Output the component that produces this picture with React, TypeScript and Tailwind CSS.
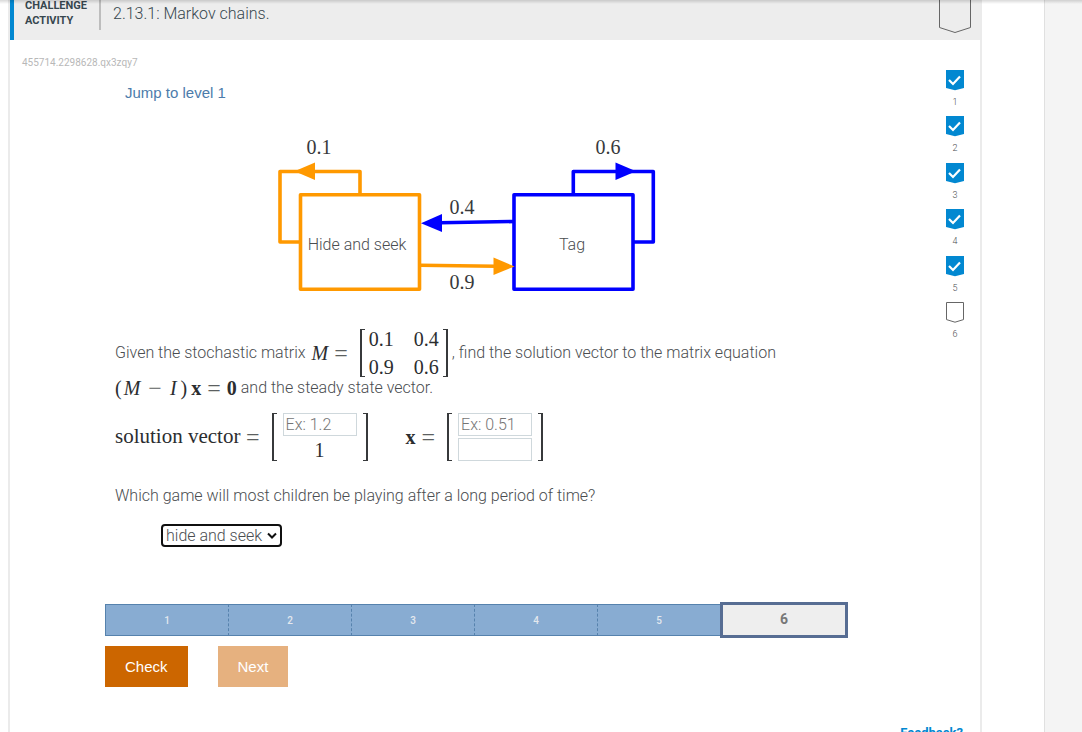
import clsx from "clsx";
import { FC, ReactNode, useState } from "react";

const levels = [1, 2, 3, 4, 5, 6];
const currentLevel = 6;

const math = "font-['Liberation_Serif',serif] text-[20px] text-[#2b2d2f]";
const operator = "font-['Liberation_Serif',serif] text-[24px] leading-6 font-normal text-[#5c5f61]";
const field =
  "block h-[23px] w-[74px] border border-[#cfd8dc] bg-white px-[2px] text-base font-light placeholder:text-[#757575] outline-none";

const LevelBadge: FC<{ done: boolean }> = ({ done }) => (
  <svg className="block h-[21px] w-[18px]" viewBox="0 0 18 21" aria-hidden="true">
    {done ? (
      <>
        <path d="M0 0H18V18L9 20.2L0 18Z" fill="#0288d1" />
        <path d="M3 10L7 14L14 6.600" fill="none" stroke="#fff" strokeWidth="2.200" />
      </>
    ) : (
      <path d="M.5 .5H17.5V17.6L9 20.2L.5 17.6Z" fill="#fff" stroke="#666" />
    )}
  </svg>
);

const Bracketed: FC<{ children: ReactNode; className?: string }> = ({ children, className }) => (
  <div className={clsx("flex h-12 items-stretch", className)}>
    <span className="w-[5px] border-y border-l-2 border-[#37393b]" />
    {children}
    <span className="w-[5px] border-y border-r-2 border-[#37393b]" />
  </div>
);

const Diagram = () => (
  <svg
    className="mt-[25px] ml-[155px] block h-[170px] w-[410px]"
    viewBox="260 130 410 170"
    role="img"
    aria-label="Transition diagram"
  >
    <g fill="none" strokeWidth="3.6" strokeLinejoin="round">
      <path d="M360 194V171.500H280V242H300" stroke="#ff9900" />
      <rect x="300.500" y="194.800" width="119" height="94.500" stroke="#ff9900" />
      <path d="M420 265.300L496 266.300" stroke="#ff9900" />
      <path d="M573.300 194V171.500H653.300V242H633" stroke="#0000ff" />
      <path d="M514 221.500L440 222.800" stroke="#0000ff" />
      <rect x="514" y="194.800" width="119" height="94.500" stroke="#0000ff" />
    </g>
    <path d="M294.500 171.300L315 162.500V180Z" fill="#ff9900" />
    <path d="M514.500 266.400L493.500 257.500V275Z" fill="#ff9900" />
    <path d="M636 171.300L615.500 162.500V180Z" fill="#0000ff" />
    <path d="M421 223.200L442 214V232Z" fill="#0000ff" />
    <g fill="#37393b" fontSize="20" textAnchor="middle" className="font-['Liberation_Serif',serif] font-normal">
      <text x="319" y="154">0.1</text>
      <text x="608" y="154">0.6</text>
      <text x="462" y="214">0.4</text>
      <text x="462" y="289">0.9</text>
    </g>
    <g fill="#4a4d50" fontSize="16" textAnchor="middle" className="font-['Roboto',sans-serif] font-light">
      <text x="357" y="250">Hide and seek</text>
      <text x="572" y="250">Tag</text>
    </g>
  </svg>
);

export default function App() {
  const [game, setGame] = useState("hide and seek");

  return (
    <div className="relative flex h-screen overflow-hidden bg-white font-['Roboto',sans-serif] text-base font-light text-[#4a4d50]">
      <div className="absolute inset-x-0 top-0 z-10 h-1 bg-linear-to-b from-black/15 to-transparent" />
      <main className="flex-1 pr-[62px] pl-2">
        <div className="border-x-2 border-[#ebebeb]">
          <header className="flex h-10 items-end overflow-hidden border-l-4 border-[#0288d1] bg-[#ededed] pr-[9px] text-[#37474f]">
            <div className="pb-3 pl-[11px] text-[11px] leading-[15px] font-bold">
              CHALLENGE
              <br />
              ACTIVITY
            </div>
            <div className="mb-[10px] ml-3 h-[34px] w-[2px] bg-[#bdbdbd]" />
            <h1 className="mb-[14px] ml-3 flex-1 text-base leading-6 font-light">2.13.1: Markov chains.</h1>
            <svg className="mb-[6px] h-10 w-8" viewBox="0 0 32 40" aria-hidden="true">
              <path d="M.5 0V33.500L16 38.500L31.500 33.500V0" fill="none" stroke="#666" />
            </svg>
          </header>

          <div className="flex">
            <div className="flex-1">
              <div className="pt-[15px] pl-3 text-[10px] leading-4 font-normal text-[#b8b8b8]">455714.2298628.qx3zqy7</div>
              <div className="pl-[95px]">
                <a
                  href="#level-1"
                  className="mt-[10px] ml-5 inline-block font-['Liberation_Sans',sans-serif] text-[15px] leading-6 font-normal text-[#4c7cab]"
                >
                  Jump to level 1
                </a>
                <Diagram />

                <div className="mt-7 ml-[10px]">
                  <div className="flex h-[50px] items-center">
                    <span>Given the stochastic matrix</span>
                    <span className={clsx(math, "ml-[6px] font-normal")}>
                      <i>M</i>
                    </span>
                    <span className={clsx(operator, "ml-[6px]")}>=</span>
                    <Bracketed className="ml-3">
                      <div className={clsx(math, "mx-1 grid grid-cols-2 gap-x-5 self-center leading-7 font-normal")}>
                        <span>0.1</span>
                        <span>0.4</span>
                        <span>0.9</span>
                        <span>0.6</span>
                      </div>
                    </Bracketed>
                    <span className="ml-1">, find the solution vector to the matrix equation</span>
                  </div>
                  <div className="flex h-5 items-center">
                    <span className={clsx(math, "flex items-center font-normal")}>
                      <span>(</span>
                      <i className="ml-[2px]">M</i>
                      <span className={clsx(operator, "mx-2")}>−</span>
                      <i>I</i>
                      <span className="ml-1">)</span>
                      <b className="ml-1">x</b>
                      <span className={clsx(operator, "mx-[6px]")}>=</span>
                      <b>0</b>
                    </span>
                    <span className="ml-1">and the steady state vector.</span>
                  </div>

                  <div className="mt-[14px] flex h-[50px] items-center">
                    <span className="w-[127px] font-['Liberation_Serif',serif] text-[21px] font-normal text-[#2b2d2f]">
                      solution vector
                    </span>
                    <span className={clsx(operator, "ml-1")}>=</span>
                    <Bracketed className="ml-3">
                      <div className="mx-[6px]">
                        <input className={field} placeholder="Ex: 1.2" aria-label="Solution vector, first entry" />
                        <div className={clsx(math, "text-center leading-7 font-normal")}>1</div>
                      </div>
                    </Bracketed>
                    <span className={clsx(math, "ml-[38px] font-bold")}>x</span>
                    <span className={clsx(operator, "ml-[6px]")}>=</span>
                    <Bracketed className="ml-3">
                      <div className="mx-[6px] flex flex-col gap-[2px]">
                        <input className={field} placeholder="Ex: 0.51" aria-label="x, first entry" />
                        <input className={field} aria-label="x, second entry" />
                      </div>
                    </Bracketed>
                  </div>

                  <label htmlFor="game" className="mt-[22px] block leading-6">
                    Which game will most children be playing after a long period of time?
                  </label>
                  <div className="relative mt-4 ml-[46px] h-[23px] w-[121px]">
                    <select
                      id="game"
                      value={game}
                      onChange={(e) => setGame(e.target.value)}
                      className="block h-full w-full appearance-none rounded-[4px] border-2 border-[#101010] bg-white pl-[3px] text-base leading-[19px] font-light outline-none"
                    >
                      <option>hide and seek</option>
                      <option>tag</option>
                    </select>
                    <svg className="pointer-events-none absolute top-2 right-[5px] h-2 w-[10px]" viewBox="0 0 10 8" aria-hidden="true">
                      <path d="M1 1.500L5 5.500L9 1.500" fill="none" stroke="#101010" strokeWidth="2" />
                    </svg>
                  </div>
                </div>

                <ol className="mt-[57px] flex h-8 max-w-[743px] text-[10px]">
                  {levels.map((level) =>
                    level === currentLevel ? (
                      <li
                        key={level}
                        className="-my-[2px] flex w-32 items-center justify-center border-3 border-[#576d93] bg-[#eeeeee] pb-[2px] text-[14px] font-bold text-[#777]"
                      >
                        {level}
                      </li>
                    ) : (
                      <li
                        key={level}
                        className="flex flex-1 items-center justify-center border-y border-r border-[#5682ad] bg-[#88acd2] font-medium text-[#e3e8ee] [border-right-style:dashed] first:border-l nth-5:border-r-0"
                      >
                        {level}
                      </li>
                    )
                  )}
                </ol>

                <div className="mt-[10px] flex gap-[30px] font-['Liberation_Sans',sans-serif] text-[15px] font-normal text-white">
                  <button className="h-[41px] bg-[#cc6600] px-5 pt-[2px]">Check</button>
                  <button className="h-[41px] bg-[#e6b17f] px-5 pt-[2px]" disabled>
                    Next
                  </button>
                </div>
              </div>
            </div>

            <ol className="mt-[30px] mr-4 flex h-[270px] flex-col justify-between text-[9px]">
              {levels.map((level) => (
                <li key={level} className="flex flex-col items-center">
                  <LevelBadge done={level < currentLevel} />
                  <span className="mt-[5px] leading-3">{level}</span>
                </li>
              ))}
            </ol>
          </div>

          <div className="flex justify-end pt-9 pr-[17px] text-[13px] leading-5 font-bold text-[#0288d1]">
            <a href="#feedback">Feedback?</a>
          </div>
        </div>
      </main>
      <aside className="w-[38px] border-l border-[#e0e0e0] bg-[#f4f4f4]" />
    </div>
  );
}
